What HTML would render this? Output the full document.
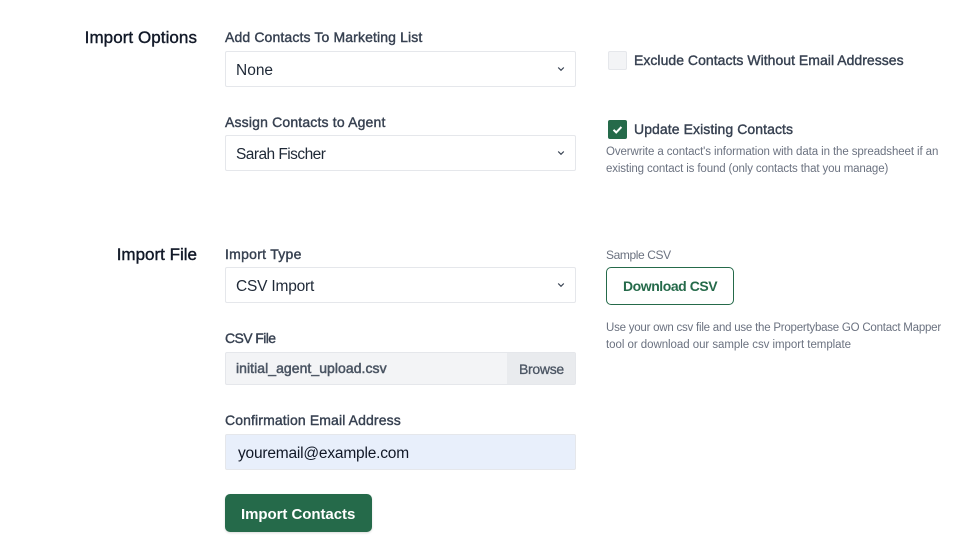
<!DOCTYPE html>
<html><head><meta charset="utf-8"><style>
html,body{margin:0;padding:0;background:#fff}
body{width:976px;height:555px;position:relative;overflow:hidden;font-family:"Liberation Sans",sans-serif}
.t{position:absolute;white-space:nowrap;line-height:20px}
.h{font-size:17px;color:#111827;-webkit-text-stroke:.4px #111827}
.l{font-size:14px;color:#374151;-webkit-text-stroke:.4px #374151}
.v{font-size:15.5px;color:#1f2937}
.s{font-size:11.5px;color:#6b7280}
.b{position:absolute;box-sizing:border-box;border:1px solid #e5e7eb;border-radius:2px;background:#fff;left:225px;width:351px}
svg{position:absolute}
</style></head><body>
<div class="t h" style="right:779px;top:28px;letter-spacing:.06px">Import Options</div>
<div class="t h" style="right:779px;top:245px">Import File</div>

<div class="t l" style="left:225px;top:27px;letter-spacing:.13px">Add Contacts To Marketing List</div>
<div class="b" style="top:51px;height:36px"></div>
<div class="t v" style="left:236px;top:61px">None</div>
<svg style="left:556px;top:65px" width="10" height="8" viewBox="0 0 10 8"><path d="M2.2 2.5l2.8 2.8 2.8-2.8" fill="none" stroke="#374151" stroke-width="1.2"/></svg>

<div class="t l" style="left:225px;top:112px;letter-spacing:.17px">Assign Contacts to Agent</div>
<div class="b" style="top:135px;height:36px"></div>
<div class="t v" style="left:236px;top:145px;letter-spacing:-.55px">Sarah Fischer</div>
<svg style="left:556px;top:149px" width="10" height="8" viewBox="0 0 10 8"><path d="M2.2 2.5l2.8 2.8 2.8-2.8" fill="none" stroke="#374151" stroke-width="1.2"/></svg>

<div style="position:absolute;box-sizing:border-box;left:608px;top:51px;width:19px;height:19px;background:#f3f4f6;border:1px solid #e5e7eb;border-radius:2px"></div>
<div class="t l" style="left:634px;top:50px;letter-spacing:.03px">Exclude Contacts Without Email Addresses</div>

<div style="position:absolute;left:608px;top:120px;width:19px;height:19px;background:#256a4a;border-radius:2px"></div>
<svg style="left:608px;top:120px" width="19" height="19" viewBox="0 0 19 19"><path d="M5.5 9.8l2.7 2.6 5.2-5.4" fill="none" stroke="#fff" stroke-width="2"/></svg>
<div class="t l" style="left:634px;top:119px;letter-spacing:.08px">Update Existing Contacts</div>
<div class="t s" style="left:606px;top:142px;letter-spacing:-.1px">Overwrite a contact's information with data in the spreadsheet if an</div>
<div class="t s" style="left:606px;top:159px;letter-spacing:-.13px">existing contact is found (only contacts that you manage)</div>

<div class="t l" style="left:225px;top:244px;letter-spacing:.27px">Import Type</div>
<div class="b" style="top:267px;height:36px"></div>
<div class="t v" style="left:236px;top:277px;letter-spacing:-.2px">CSV Import</div>
<svg style="left:556px;top:281px" width="10" height="8" viewBox="0 0 10 8"><path d="M2.2 2.5l2.8 2.8 2.8-2.8" fill="none" stroke="#374151" stroke-width="1.2"/></svg>

<div class="t l" style="left:225px;top:328px;letter-spacing:-.6px">CSV File</div>
<div class="b" style="top:352px;height:33px;background:#f3f4f6"></div>
<div style="position:absolute;left:507px;top:353px;width:68px;height:31px;background:#e9ebee"></div>
<div class="t" style="left:236px;top:358px;font-size:14px;color:#4b5563;-webkit-text-stroke:.5px #4b5563;letter-spacing:.05px">initial_agent_upload.csv</div>
<div class="t" style="left:519px;top:359px;font-size:14px;color:#4b5563;-webkit-text-stroke:.3px #4b5563;letter-spacing:-.3px">Browse</div>

<div class="t l" style="left:225px;top:410px;letter-spacing:.12px">Confirmation Email Address</div>
<div class="b" style="top:434px;height:36px;background:#e8effb"></div>
<div class="t" style="left:238px;top:444px;font-size:15.5px;color:#111827;letter-spacing:-.2px">youremail@example.com</div>

<div style="position:absolute;left:225px;top:494px;width:147px;height:38px;background:#256a4a;border-radius:5px;box-shadow:0 1px 2px rgba(0,0,0,.15)"></div>
<div class="t" style="left:241px;top:505px;font-size:15px;font-weight:700;color:#fff;letter-spacing:-.05px">Import Contacts</div>

<div class="t s" style="left:606px;top:245px;font-size:12px;letter-spacing:-.4px">Sample CSV</div>
<div style="position:absolute;box-sizing:border-box;left:606px;top:267px;width:128px;height:38px;border:1px solid #256a4a;border-radius:5px;background:#fff"></div>
<div class="t" style="left:623px;top:276px;font-size:14px;font-weight:700;color:#256a4a;letter-spacing:-.45px">Download CSV</div>
<div class="t s" style="left:606px;top:318px;letter-spacing:-.23px">Use your own csv file and use the Propertybase GO Contact Mapper</div>
<div class="t s" style="left:606px;top:335px;letter-spacing:-.05px">tool or download our sample csv import template</div>
</body></html>
